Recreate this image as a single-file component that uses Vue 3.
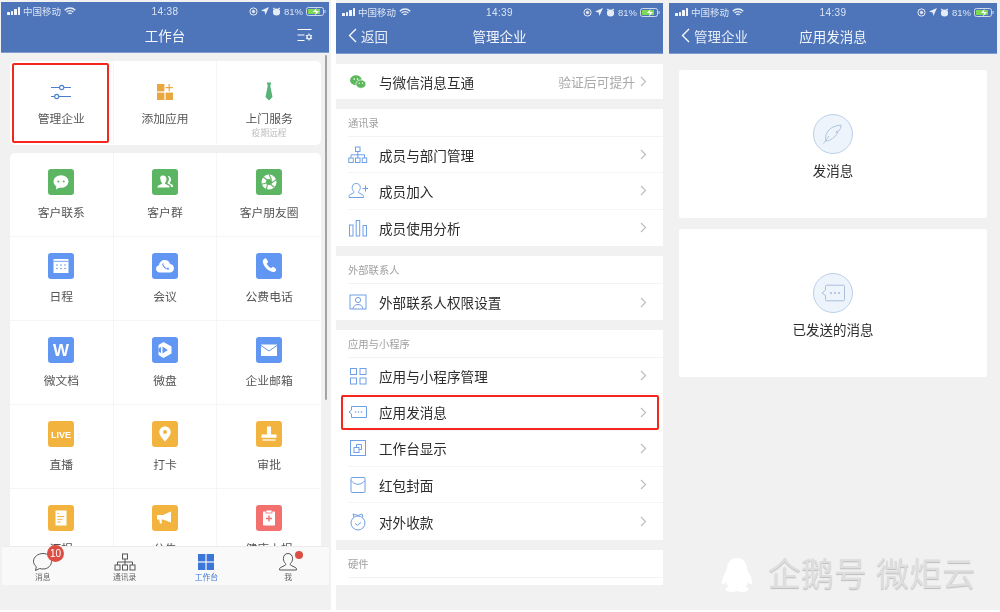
<template>
  <div class="page">
    <!-- 工作台 -->
    <div class="phone first">
      <div class="topbar">
        <div class="status">
          <div class="status-left">
            <span class="signal"><i></i><i></i><i></i><i></i></span>
            <span>中国移动</span>
            <svg width="12" height="9" viewBox="0 0 12 9" fill="none" stroke="#e6ecf6" stroke-width="1.4"><path d="M.8 3.2a7.4 7.4 0 0 1 10.4 0M2.6 5a4.8 4.8 0 0 1 6.8 0M4.4 6.8a2.2 2.2 0 0 1 3.2 0" /></svg>
          </div>
          <span class="clock">14:38</span>
          <div class="status-right">
            <svg width="9" height="9" viewBox="0 0 9 9" fill="none" stroke="#e6ecf6"><circle cx="4.5" cy="4.5" r="3.6" /><circle cx="4.5" cy="4.5" r="1.2" fill="#e6ecf6" /></svg>
            <svg width="8" height="8" viewBox="0 0 8 8" fill="#e6ecf6"><path d="M8 0 0 3.6l3.6.8.8 3.6z" /></svg>
            <svg width="9" height="9" viewBox="0 0 9 9" fill="#e6ecf6"><circle cx="4.5" cy="5" r="3.6" /><path d="M.8 1.6 2 .6l1 .8-1.4 1.2zM8.2 1.6 7 .6l-1 .8 1.4 1.2z" /></svg>
            <span>81%</span>
            <svg class="battery" width="20" height="9" viewBox="0 0 20 9"><rect x=".5" y=".5" width="17" height="8" rx="2" fill="none" stroke="#cfdaee" /><rect x="2" y="2" width="12" height="5" fill="#7ed957" /><path d="M10.5 1 7 5h3L9 8.5 13 4h-3z" fill="#fff" /><rect x="18.5" y="3" width="1" height="3" fill="#cfdaee" /></svg>
          </div>
        </div>
        <div class="navbar">
          <span class="title">工作台</span>
          <svg class="nav-setting" width="16" height="14" viewBox="0 0 16 14" fill="none" stroke="#fff" stroke-width="1.1"><path d="M.5 1.5h14M.5 7h7M.5 12.5h7" /><circle cx="12" cy="9" r="2" /><path d="M12 5.6v1.2M12 11.2v1.2M9 7.4l1 .6M14 10l1 .6M15 7.4l-1 .6M10 10l-1 .6" /></svg>
        </div>
      </div>
      <div class="scroll">
        <div class="card tiles quick">
          <div v-for="t in quickTiles" :key="t.label" class="tile">
            <svg class="tile-icon" viewBox="0 0 26 26" v-html="icons[t.icon]"></svg>
            <span class="tile-label">{{ t.label }}</span>
            <span v-if="t.sub" class="tile-sub">{{ t.sub }}</span>
          </div>
          <div class="red-box quick-box"></div>
        </div>
        <div class="card tiles apps">
          <div v-for="t in appTiles" :key="t.label" class="tile">
            <svg class="tile-icon" viewBox="0 0 26 26" v-html="icons[t.icon]"></svg>
            <span class="tile-label">{{ t.label }}</span>
          </div>
        </div>
        <div class="scrollbar"></div>
      </div>
      <div class="tabbar">
        <div class="tab">
          <svg width="22" height="20" viewBox="0 0 22 20" fill="none" stroke="#555" stroke-width="1"><path d="M11 1.5c5 0 8.5 3.400 8.5 7.700S16 17 11 17c-1.200 0-2.300-.2-3.300-.5L3.500 18.500l.8-3.800C2.500 13.300 1.500 11.400 1.500 9.200 1.500 4.900 6 1.500 11 1.500z" /></svg>
          <span>消息</span>
          <em class="count">10</em>
        </div>
        <div class="tab">
          <svg width="22" height="20" viewBox="0 0 22 20" fill="none" stroke="#555" stroke-width="1"><rect x="8.5" y="2" width="5" height="5" /><rect x="1" y="13" width="5" height="5" /><rect x="8.5" y="13" width="5" height="5" /><rect x="16" y="13" width="5" height="5" /><path d="M11 7v6M3.5 13v-3h15v3" /></svg>
          <span>通讯录</span>
        </div>
        <div class="tab active">
          <svg width="18" height="18" viewBox="0 0 18 18" fill="#3b76d8"><rect x="1" y="1" width="7.4" height="7.4" /><rect x="9.6" y="1" width="7.4" height="7.4" /><rect x="1" y="9.6" width="7.4" height="7.4" /><rect x="9.6" y="9.6" width="7.4" height="7.4" /></svg>
          <span>工作台</span>
        </div>
        <div class="tab">
          <svg width="20" height="20" viewBox="0 0 20 20" fill="none" stroke="#555" stroke-width="1"><path d="M10 1.5c2.800 0 4.600 2.200 4.600 5 0 2-1 4-2.100 5-.6.600-.3 1.500.4 1.800l4.800 2.400c.6.300.8 1 .8 2.300H1.500c0-1.300.2-2 .8-2.300l4.800-2.400c.7-.3 1-1.200.4-1.800-1.100-1-2.100-3-2.100-5 0-2.800 1.800-5 4.600-5z" /></svg>
          <span>我</span>
          <em class="dot"></em>
        </div>
      </div>
    </div>

    <!-- 管理企业 -->
    <div class="phone second">
      <div class="topbar">
        <div class="status">
          <div class="status-left">
            <span class="signal"><i></i><i></i><i></i><i></i></span>
            <span>中国移动</span>
            <svg width="12" height="9" viewBox="0 0 12 9" fill="none" stroke="#e6ecf6" stroke-width="1.4"><path d="M.8 3.2a7.4 7.4 0 0 1 10.4 0M2.6 5a4.8 4.8 0 0 1 6.8 0M4.4 6.8a2.2 2.2 0 0 1 3.2 0" /></svg>
          </div>
          <span class="clock">14:39</span>
          <div class="status-right">
            <svg width="9" height="9" viewBox="0 0 9 9" fill="none" stroke="#e6ecf6"><circle cx="4.5" cy="4.5" r="3.6" /><circle cx="4.5" cy="4.5" r="1.2" fill="#e6ecf6" /></svg>
            <svg width="8" height="8" viewBox="0 0 8 8" fill="#e6ecf6"><path d="M8 0 0 3.6l3.6.8.8 3.6z" /></svg>
            <svg width="9" height="9" viewBox="0 0 9 9" fill="#e6ecf6"><circle cx="4.5" cy="5" r="3.6" /><path d="M.8 1.6 2 .6l1 .8-1.4 1.2zM8.2 1.6 7 .6l-1 .8 1.4 1.2z" /></svg>
            <span>81%</span>
            <svg class="battery" width="20" height="9" viewBox="0 0 20 9"><rect x=".5" y=".5" width="17" height="8" rx="2" fill="none" stroke="#cfdaee" /><rect x="2" y="2" width="12" height="5" fill="#7ed957" /><path d="M10.5 1 7 5h3L9 8.5 13 4h-3z" fill="#fff" /><rect x="18.5" y="3" width="1" height="3" fill="#cfdaee" /></svg>
          </div>
        </div>
        <div class="navbar">
          <div class="back">
            <svg width="9" height="15" viewBox="0 0 9 15" fill="none" stroke="#fff" stroke-width="1.3"><path d="M8 1 1.5 7.5 8 14" /></svg>
            <span>返回</span>
          </div>
          <span class="title">管理企业</span>
        </div>
      </div>
      <div class="list-body">
        <div class="group">
          <div class="row wechat-row">
            <svg class="row-icon" viewBox="-2 -2 24 24"><ellipse cx="7.5" cy="8" rx="7" ry="6" fill="#5cb85c" /><ellipse cx="13.5" cy="12.5" rx="6" ry="5" fill="#5cb85c" stroke="#fff" stroke-width=".8" /><circle cx="5.5" cy="6.5" r="1" fill="#fff" /><circle cx="9.5" cy="6.5" r="1" fill="#fff" /><circle cx="11.5" cy="11.5" r=".8" fill="#fff" /><circle cx="15.5" cy="11.5" r=".8" fill="#fff" /></svg>
            <span class="row-text">与微信消息互通</span>
            <span class="row-value">验证后可提升</span>
            <svg class="chev" width="7" height="11" viewBox="0 0 7 11" fill="none" stroke="#bdbdbd" stroke-width="1.2"><path d="m1 1 4.5 4.5L1 10" /></svg>
          </div>
        </div>
        <div v-for="g in groups" :key="g.name" class="group">
          <div class="group-name">{{ g.name }}</div>
          <div v-for="r in g.rows" :key="r.text" class="row">
            <svg class="row-icon" viewBox="0 0 20 20" v-html="rowIcons[r.icon]"></svg>
            <span class="row-text">{{ r.text }}</span>
            <svg class="chev" width="7" height="11" viewBox="0 0 7 11" fill="none" stroke="#bdbdbd" stroke-width="1.2"><path d="m1 1 4.5 4.5L1 10" /></svg>
            <div v-if="r.marked" class="red-box row-box"></div>
          </div>
        </div>
        <div class="group stub">
          <div class="group-name">硬件</div>
        </div>
      </div>
    </div>

    <!-- 应用发消息 -->
    <div class="phone third">
      <div class="topbar">
        <div class="status">
          <div class="status-left">
            <span class="signal"><i></i><i></i><i></i><i></i></span>
            <span>中国移动</span>
            <svg width="12" height="9" viewBox="0 0 12 9" fill="none" stroke="#e6ecf6" stroke-width="1.4"><path d="M.8 3.2a7.4 7.4 0 0 1 10.4 0M2.6 5a4.8 4.8 0 0 1 6.8 0M4.4 6.8a2.2 2.2 0 0 1 3.2 0" /></svg>
          </div>
          <span class="clock">14:39</span>
          <div class="status-right">
            <svg width="9" height="9" viewBox="0 0 9 9" fill="none" stroke="#e6ecf6"><circle cx="4.5" cy="4.5" r="3.6" /><circle cx="4.5" cy="4.5" r="1.2" fill="#e6ecf6" /></svg>
            <svg width="8" height="8" viewBox="0 0 8 8" fill="#e6ecf6"><path d="M8 0 0 3.6l3.6.8.8 3.6z" /></svg>
            <svg width="9" height="9" viewBox="0 0 9 9" fill="#e6ecf6"><circle cx="4.5" cy="5" r="3.6" /><path d="M.8 1.6 2 .6l1 .8-1.4 1.2zM8.2 1.6 7 .6l-1 .8 1.4 1.2z" /></svg>
            <span>81%</span>
            <svg class="battery" width="20" height="9" viewBox="0 0 20 9"><rect x=".5" y=".5" width="17" height="8" rx="2" fill="none" stroke="#cfdaee" /><rect x="2" y="2" width="12" height="5" fill="#7ed957" /><path d="M10.5 1 7 5h3L9 8.5 13 4h-3z" fill="#fff" /><rect x="18.5" y="3" width="1" height="3" fill="#cfdaee" /></svg>
          </div>
        </div>
        <div class="navbar">
          <div class="back">
            <svg width="9" height="15" viewBox="0 0 9 15" fill="none" stroke="#fff" stroke-width="1.3"><path d="M8 1 1.5 7.5 8 14" /></svg>
            <span>管理企业</span>
          </div>
          <span class="title">应用发消息</span>
        </div>
      </div>
      <div class="send-body">
        <div class="send-card">
          <div class="circle">
            <svg width="24" height="24" viewBox="0 0 24 24" fill="none" stroke="#a9bfdc" stroke-width=".9"><path d="M2.5 21.5 8 14M5 19c-.9-3.500-.3-7 2-10 2.500-3.200 7-5.500 13-6-.2 2.700-1 4.600-2.200 6l-3 .9 2 .3c-.8 1.800-2 3.400-3.500 4.800C10.800 17.300 8 19 5 19z" /></svg>
          </div>
          <span>发消息</span>
        </div>
        <div class="send-card">
          <div class="circle">
            <svg width="26" height="18" viewBox="0 0 26 18" fill="none" stroke="#a9bfdc" stroke-width="1"><path d="M5.5 2.5c0-.8.500-1.300 1.300-1.300h16.400c.8 0 1.300.5 1.300 1.300v13c0 .8-.5 1.300-1.300 1.300H6.800c-.8 0-1.300-.5-1.300-1.300v-4L2 9l3.500-3z" /><circle cx="11" cy="9" r="1.1" fill="#a9bfdc" stroke="none" /><circle cx="15" cy="9" r="1.1" fill="#a9bfdc" stroke="none" /><circle cx="19" cy="9" r="1.1" fill="#a9bfdc" stroke="none" /></svg>
          </div>
          <span>已发送的消息</span>
        </div>
      </div>
    </div>

    <!-- 水印 -->
    <div class="watermark">
      <svg width="38" height="36" viewBox="0 0 38 36" fill="#fff"><path d="M19 1c6 0 9.500 4.500 10 10 .1 1.500.5 2.500 1.500 4 2 3 3.500 7 3.500 10.500 0 2-.8 2.500-2.500 1-.5-.4-1-1.200-1.300-2-.4 2-1.400 3.700-2.700 5 2 .8 3 1.700 3 3 0 1.500-2.500 2.500-6 2.500-2.500 0-4.500-.4-5.500-1.200-1 .8-3 1.200-5.500 1.200-3.500 0-6-1-6-2.500 0-1.300 1-2.200 3-3-1.300-1.300-2.300-3-2.700-5-.3.800-.8 1.600-1.300 2-1.700 1.500-2.500 1-2.500-1 0-3.500 1.500-7.500 3.500-10.500 1-1.500 1.400-2.500 1.500-4C9.500 5.500 13 1 19 1z" /></svg>
      <span>企鹅号 微炬云</span>
    </div>
  </div>
</template>

<script setup>
const quickTiles = [
  { label: '管理企业', icon: 'manage' },
  { label: '添加应用', icon: 'addApp' },
  { label: '上门服务', icon: 'tie', sub: '疫期远程' },
]

const appTiles = [
  { label: '客户联系', icon: 'chat' },
  { label: '客户群', icon: 'people' },
  { label: '客户朋友圈', icon: 'lens' },
  { label: '日程', icon: 'calendar' },
  { label: '会议', icon: 'cloud' },
  { label: '公费电话', icon: 'phone' },
  { label: '微文档', icon: 'doc' },
  { label: '微盘', icon: 'disk' },
  { label: '企业邮箱', icon: 'mail' },
  { label: '直播', icon: 'live' },
  { label: '打卡', icon: 'pin' },
  { label: '审批', icon: 'stamp' },
  { label: '汇报', icon: 'report' },
  { label: '公告', icon: 'horn' },
  { label: '健康上报', icon: 'health' },
]

const square = (c) => `<rect width="26" height="26" rx="3" fill="${c}"/>`
const GREEN = '#5cb562'
const BLUE = '#6196f3'
const YELLOW = '#f3b43f'

const icons = {
  manage: `<g fill="none" stroke="#4a7fd0" stroke-width="1.1"><path d="M3 8.5h8.500M16 8.5h7M3 17.5h3.500M11 17.5h12"/><circle cx="13.7" cy="8.5" r="2.1"/><circle cx="8.7" cy="17.5" r="2.1"/></g>`,
  addApp: `<g fill="#eaa73f"><rect x="5" y="5" width="7.4" height="7.4"/><rect x="5" y="13.6" width="7.4" height="7.4"/><rect x="13.6" y="13.6" width="7.4" height="7.4"/><path d="M16.6 5h1.2v3h3v1.2h-3v3h-1.2v-3h-3V8h3z"/></g>`,
  tie: `<path d="M10.8 3.5h4.4l-.9 3.500 2.200 11-3.500 3.500L9.500 18l2.200-11z" fill="#58b27a"/>`,
  chat: square(GREEN) + `<ellipse cx="13" cy="12.5" rx="7.5" ry="6.3" fill="#fff"/><path d="m8.5 16.5-.5 4 4.500-2.500z" fill="#fff"/><circle cx="10.3" cy="12.5" r="1" fill="${GREEN}"/><circle cx="15.7" cy="12.5" r="1" fill="${GREEN}"/>`,
  people: square(GREEN) + `<path d="M11 6.5c2.200 0 3.500 1.700 3.500 3.800 0 1.500-.6 2.700-1.400 3.500-.4.500-.2 1 .4 1.300l3.500 1.700c.5.300.5 1 .5 1.700H5.500c0-.7 0-1.400.5-1.700l3.500-1.700c.6-.3.800-.8.400-1.300-.8-.8-1.400-2-1.400-3.500C7.500 8.200 8.800 6.500 11 6.500z" fill="#fff"/><path d="M16 7c1.800.2 3 1.600 3 3.500 0 1.300-.5 2.400-1.200 3.100-.3.400 0 .8.300 1l2.400 1.200c.4.200.5.800.5 2.200h-2c0-1.200-.6-2-1.500-2.400l-1.500-.8c-.5-.3-.7-.8-.2-1.500.8-1 1.200-2 1.200-3.300 0-1-.3-1.700-1-2.500z" fill="#fff"/>`,
  lens: square(GREEN) + `<circle cx="13" cy="13" r="7.5" fill="#fff"/><circle cx="13" cy="13" r="3" fill="${GREEN}"/><g stroke="${GREEN}" stroke-width="1.1"><path d="M13 5.5l2.600 5.300M20.100 10.700l-4.900 3.600M18.300 18.300l-4.200-3.300M10.500 20.100l1-5.600M5.700 15.200l5.400-1.500M7.200 8l4.300 3.200"/></g>`,
  calendar: square(BLUE) + `<rect x="5.5" y="6" width="15" height="14" fill="#fff"/><path d="M5.5 8.3h15" stroke="${BLUE}" stroke-width=".9"/><g fill="${BLUE}"><circle cx="9" cy="12" r=".8"/><circle cx="13" cy="12" r=".8"/><circle cx="17" cy="12" r=".8"/><circle cx="9" cy="15.5" r=".8"/><circle cx="13" cy="15.5" r=".8"/><circle cx="17" cy="15.5" r=".8"/></g>`,
  cloud: square(BLUE) + `<path d="M7.8 19.5c-2.300 0-3.800-1.700-3.800-3.700 0-1.800 1.200-3.200 3-3.600.4-3.200 2.900-5.200 5.700-5.200 2.600 0 4.700 1.600 5.400 4 2.200.2 3.900 2 3.900 4.200 0 2.400-1.900 4.300-4.300 4.300z" fill="#fff"/><path d="M11.3 11.5c1 1.900 1.800 2.800 3.500 3.900l1-1 1.500 1c-.4 1-1 1.400-1.800 1.200-2.700-.8-4.500-2.500-5.300-5 0-.7.400-1.300 1.200-1.500z" fill="${BLUE}"/>`,
  phone: square(BLUE) + `<path d="M8.8 5.5c.6-.3 1.100-.2 1.500.3l1.600 2.400c.3.500.2 1-.2 1.400l-1 1c.9 2 2.300 3.500 4.300 4.600l1.100-1c.4-.4.900-.4 1.400-.1l2.300 1.600c.5.400.6.900.3 1.500-.6 1.300-1.600 2-2.900 1.800-5.300-1-9.300-5-10.400-10.300-.2-1.300.6-2.400 2-3.200z" fill="#fff"/>`,
  doc: square(BLUE) + `<text x="13" y="18.8" text-anchor="middle" font-family="Liberation Sans, sans-serif" font-weight="700" font-size="17" fill="#fff">W</text>`,
  disk: square(BLUE) + `<path d="M11.5 5 19.500 9.500v7L11.500 21l-5-3V8z" fill="#fff"/><path d="M10.5 9.5 15.800 13l-5.300 3.500z" fill="${BLUE}"/><path d="M6.5 11.5v3l2.500 1.500v-6z" fill="${BLUE}"/>`,
  mail: square(BLUE) + `<rect x="5" y="7.5" width="16" height="11.5" fill="#fff"/><path d="m5 8.5 8 5.500 8-5.500" fill="none" stroke="${BLUE}" stroke-width="1"/>`,
  live: square(YELLOW) + `<text x="13" y="16.8" text-anchor="middle" font-family="Liberation Sans, sans-serif" font-weight="700" font-size="9" fill="#fff">LIVE</text>`,
  pin: square(YELLOW) + `<path d="M13 5.5c3.400 0 5.700 2.500 5.700 5.500 0 3.300-3.200 6.800-5.700 9.500-2.500-2.700-5.700-6.200-5.700-9.500 0-3 2.300-5.500 5.700-5.500z" fill="#fff"/><circle cx="13" cy="11" r="2" fill="${YELLOW}"/>`,
  stamp: square(YELLOW) + `<path d="M11 5.5h4v8h5.500v3.300h-15v-3.300H11z" fill="#fff"/><rect x="6.5" y="18" width="13" height="2" fill="#fbe3b5"/>`,
  report: square(YELLOW) + `<rect x="7.5" y="5.5" width="11" height="15" fill="#fff"/><path d="M9.3 8.5h1.500M9.300 11.500h7M9.300 14.300h5M9.300 17h3.500" stroke="${YELLOW}" stroke-width="1"/>`,
  horn: square(YELLOW) + `<path d="M5 10h6l8-3.500v11L11 14.500h-1.500l.5 4H8l-.8-4H5z" fill="#fff"/>`,
  health: square('#f2716e') + `<rect x="7" y="6.5" width="12" height="14" rx=".7" fill="#fff"/><rect x="10" y="5" width="6" height="3" fill="#fff" stroke="#f2716e" stroke-width=".8"/><path d="M13 10.5v6M10 13.500h6" stroke="#f2716e" stroke-width="1.4"/>`,
}

const groups = [
  {
    name: '通讯录',
    rows: [
      { text: '成员与部门管理', icon: 'org' },
      { text: '成员加入', icon: 'addUser' },
      { text: '成员使用分析', icon: 'bars' },
    ],
  },
  {
    name: '外部联系人',
    rows: [{ text: '外部联系人权限设置', icon: 'contact' }],
  },
  {
    name: '应用与小程序',
    rows: [
      { text: '应用与小程序管理', icon: 'grid' },
      { text: '应用发消息', icon: 'tag', marked: true },
      { text: '工作台显示', icon: 'display' },
      { text: '红包封面', icon: 'envelope' },
      { text: '对外收款', icon: 'bag' },
    ],
  },
]

const line = 'fill="none" stroke="#6f9fe6" stroke-width="1"'

const rowIcons = {
  org: `<g ${line}><rect x="7.5" y="2" width="4.5" height="4.5"/><rect x=".8" y="13" width="4.5" height="4.5"/><rect x="7.5" y="13" width="4.5" height="4.5"/><rect x="14.2" y="13" width="4.5" height="4.5"/><path d="M9.8 6.5V13M3 13V9.800h13.500V13"/></g>`,
  addUser: `<g ${line}><path d="M8.5 2.5c2.300 0 3.800 1.800 3.800 4 0 1.600-.7 3-1.600 3.900-.5.500-.3 1.200.3 1.500l3.700 1.900c.5.300.8.800.8 2.700H1c0-1.900.3-2.400.8-2.700l3.700-1.900c.6-.3.800-1 .3-1.500-.9-.9-1.600-2.300-1.600-3.900 0-2.200 1.500-4 3.800-4z"/><path d="M14.5 7.5h6M17.500 4.500v6"/></g>`,
  bars: `<g ${line}><rect x="1.5" y="7" width="3.5" height="11"/><rect x="8.2" y="2.5" width="3.5" height="15.5"/><rect x="15" y="7.5" width="3.5" height="10.5"/></g>`,
  contact: `<g ${line}><rect x="2" y="3" width="16" height="14"/><circle cx="10" cy="8" r="2.6"/><path d="M5 17c.3-3 2.400-4.500 5-4.500s4.700 1.500 5 4.500"/></g>`,
  grid: `<g ${line}><rect x="2.5" y="2.5" width="6" height="6"/><rect x="12" y="2.5" width="6" height="6"/><rect x="2.5" y="12" width="6" height="6"/><rect x="12" y="12" width="6" height="6"/></g>`,
  tag: `<g ${line}><path d="M3.5 4.5h15v11h-15v-3.500L1 10l2.500-2z"/></g><g fill="#6f9fe6"><circle cx="7.5" cy="10" r=".8"/><circle cx="10.5" cy="10" r=".8"/><circle cx="13.5" cy="10" r=".8"/></g>`,
  display: `<g ${line}><rect x="2.5" y="2.5" width="15" height="15"/><rect x="6" y="9.5" width="5" height="5"/><path d="M8.5 9.5V6.500h5v5h-2.500"/></g>`,
  envelope: `<g ${line}><rect x="3" y="2.5" width="14" height="15" rx="1"/><path d="M3 5.5c2 2.500 4.500 3.800 7 3.800s5-1.300 7-3.800"/></g>`,
  bag: `<g ${line}><circle cx="10" cy="11" r="7"/><path d="M6 5 5 2l5 1.500L14 2l1 3"/><path d="m7 11.5 2.200 1.800 3.800-2.800"/></g>`,
}
</script>

<style>
body { background: #fff; }
</style>

<style scoped>
.page {
  position: relative;
  display: flex;
  width: 1000px;
  height: 612px;
  overflow: hidden;
  background: #fff;
  font-family: "Liberation Sans", "Noto Sans CJK SC", sans-serif;
  filter: blur(.3px);
}

.phone {
  height: 610px;
  display: flex;
  flex-direction: column;
  overflow: hidden;
  flex-shrink: 0;
  box-sizing: border-box;
  background: #f1f1f1;
}

.first {
  width: 331px;
  padding: 2px 2px 0 1px;
  margin-right: 5px;
}
.second {
  width: 333px;
  padding: 3px 6px 0 0;
}
.third {
  width: 331px;
  padding: 3px 3px 0 0;
}

.topbar {
  height: 51px;
  flex-shrink: 0;
  background: #4e75b9;
  color: #fff;
  box-shadow: inset 0 -1px 0 #7f9dcf;
}

.status {
  display: flex;
  align-items: center;
  justify-content: space-between;
  height: 18px;
  padding: 0 3px 0 6px;
  position: relative;
  font-size: 9.5px;
  color: #dbe4f3;
}

.status-left, .status-right {
  display: flex;
  align-items: center;
  gap: 3px;
}

.clock {
  position: absolute;
  left: 0;
  right: 0;
  text-align: center;
  font-size: 10px;
  letter-spacing: .4px;
}

.signal {
  display: flex;
  align-items: flex-end;
  gap: 1px;
  height: 8px;
}
.signal i {
  width: 2.5px;
  background: #f2f5fb;
  border-radius: .5px;
}
.signal i:nth-child(1) { height: 3px; }
.signal i:nth-child(2) { height: 4px; }
.signal i:nth-child(3) { height: 6px; }
.signal i:nth-child(4) { height: 8px; }

.battery { flex-shrink: 0; }

.navbar {
  position: relative;
  height: 33px;
  display: flex;
  align-items: center;
  justify-content: center;
}

.title {
  font-size: 13.5px;
  margin-bottom: 4px;
  color: #f3f6fb;
}

.nav-setting {
  position: absolute;
  right: 16px;
  top: 8px;
}

.back {
  position: absolute;
  left: 12px;
  top: 0;
  height: 29px;
  display: flex;
  align-items: center;
  gap: 4px;
  font-size: 13.5px;
  color: #e6ecf6;
}

/* 工作台 */
.scroll {
  position: relative;
  height: 494px;
  flex-shrink: 0;
  overflow: hidden;
  padding: 8px 8px 0 9px;
  box-sizing: border-box;
}

.card {
  background: #fff;
  border-radius: 5px;
}

.tiles {
  display: grid;
  grid-template-columns: repeat(3, 1fr);
}

.quick {
  position: relative;
  height: 84px;
  margin-bottom: 8px;
}

.tile {
  height: 84px;
  box-sizing: border-box;
  display: flex;
  flex-direction: column;
  align-items: center;
  padding-top: 16px;
  border-right: 1px solid #f5f5f5;
  border-bottom: 1px solid #f5f5f5;
  color: #555;
}
.tile:nth-child(3n) { border-right: 0; }
.quick .tile { border-bottom: 0; padding-top: 18px; }

.tile-icon {
  width: 26px;
  height: 26px;
  flex-shrink: 0;
}

.tile-label {
  margin-top: 9px;
  font-size: 11.8px;
  line-height: 18px;
}
.quick .tile-label { margin-top: 5px; }

.tile-sub {
  font-size: 8.7px;
  line-height: 10px;
  color: #bbb;
}

.red-box {
  position: absolute;
  border: 2px solid #f5261c;
  border-radius: 2px;
  box-sizing: border-box;
  pointer-events: none;
}

.quick-box {
  left: 2px;
  top: 2px;
  width: 97px;
  height: 80px;
}

.scrollbar {
  position: absolute;
  right: 2px;
  top: 2px;
  width: 2.5px;
  height: 345px;
  border-radius: 2px;
  background: #a3a3a3;
}

.tabbar {
  height: 38px;
  flex-shrink: 0;
  display: grid;
  grid-template-columns: repeat(4, 1fr);
  background: #f9f9f9;
  box-shadow: 0 -1px 0 #ececec;
  margin-left: 1px;
  position: relative;
}

.tab {
  position: relative;
  display: flex;
  flex-direction: column;
  align-items: center;
  justify-content: flex-start;
  padding-top: 5px;
  font-size: 7.8px;
  line-height: 10px;
  color: #666;
}
.tab.active { color: #3b76d8; }
.tab svg { height: 20px; margin-bottom: 1px; }

.count {
  position: absolute;
  left: 45px;
  top: -2px;
  width: 17px;
  height: 17px;
  border-radius: 50%;
  background: #dc4d43;
  color: #fff;
  font-style: normal;
  font-size: 10px;
  line-height: 17px;
  text-align: center;
}

.dot {
  position: absolute;
  left: 48px;
  top: 4px;
  width: 8px;
  height: 8px;
  border-radius: 50%;
  background: #dc4d43;
}

/* 管理企业 */
.list-body {
  flex: 1;
  padding-top: 10px;
  display: flex;
  flex-direction: column;
  gap: 10px;
}

.group {
  background: #fff;
  flex-shrink: 0;
  padding-left: 12px;
}

.group-name {
  height: 28px;
  line-height: 29px;
  font-size: 10.3px;
  color: #a0a0a0;
  box-sizing: border-box;
  border-bottom: 1px solid #f3f3f3;
}

.row {
  position: relative;
  height: 36.3px;
  display: flex;
  align-items: center;
  padding-right: 16px;
  box-sizing: border-box;
  border-bottom: 1px solid #f5f5f5;
}
.row:last-child { border-bottom: 0; }
.wechat-row { height: 35px; }

.row-icon {
  width: 20px;
  height: 20px;
  flex-shrink: 0;
  margin-right: 11px;
}

.row-text {
  flex: 1;
  font-size: 13.6px;
  color: #2c2c2c;
}

.row-value {
  font-size: 12.8px;
  color: #aaa;
  margin-right: 5px;
}

.row-box {
  left: -7px;
  top: 1px;
  right: 4px;
  height: 35px;
}

.stub {
  height: 35px;
}

/* 应用发消息 */
.send-body {
  padding: 16px 10px 0;
  display: flex;
  flex-direction: column;
  gap: 10.5px;
}

.send-card {
  height: 148px;
  background: #fff;
  border-radius: 2px;
  display: flex;
  flex-direction: column;
  align-items: center;
  padding-top: 44px;
  box-sizing: border-box;
  font-size: 13.5px;
  line-height: 18px;
  color: #2c2c2c;
}

.circle {
  width: 40px;
  height: 40px;
  border-radius: 50%;
  border: 1px solid #bcd0e8;
  background: #edf4fc;
  box-sizing: border-box;
  display: flex;
  align-items: center;
  justify-content: center;
  margin-bottom: 9px;
}

.watermark {
  position: absolute;
  left: 718px;
  top: 557px;
  display: flex;
  align-items: center;
  gap: 12px;
  font-size: 33px;
  line-height: 36px;
  color: #dedede;
  text-shadow: 0 1px 1px #bdbdbd;
}
</style>
